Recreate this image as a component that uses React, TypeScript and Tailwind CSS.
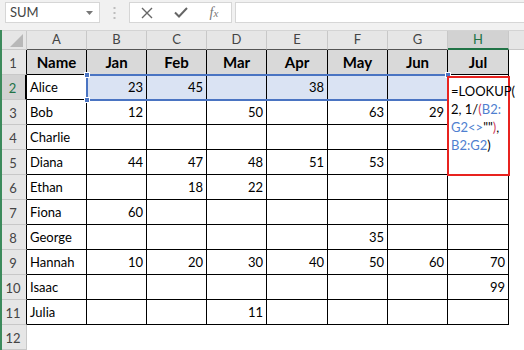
import React from "react";

const cols = ["A", "B", "C", "D", "E", "F", "G", "H"];
const head = ["Name", "Jan", "Feb", "Mar", "Apr", "May", "Jun", "Jul"];
const data: string[][] = [
  ["Alice", "23", "45", "", "38", "", "", ""],
  ["Bob", "12", "", "50", "", "63", "29", ""],
  ["Charlie", "", "", "", "", "", "", ""],
  ["Diana", "44", "47", "48", "51", "53", "", ""],
  ["Ethan", "", "18", "22", "", "", "", ""],
  ["Fiona", "60", "", "", "", "", "", ""],
  ["George", "", "", "", "", "35", "", ""],
  ["Hannah", "10", "20", "30", "40", "50", "60", "70"],
  ["Isaac", "", "", "", "", "", "", "99"],
  ["Julia", "", "", "11", "", "", "", ""],
];

function RowHead({ n, active }: { n: number; active?: boolean }) {
  return (
    <div
      className={
        "flex items-center justify-center pt-[3px] text-[13px] border-b border-[#c8c8c8] " +
        (n <= 11 ? "border-r border-r-black " : "border-r border-r-[#c8c8c8] ") +
        (active ? "bg-[#d2d2d2] text-[#217346] border-r-2 border-r-[#217346]" : "bg-[#e6e6e6] text-[#444]")
      }
    >
      {n}
    </div>
  );
}

export default function App() {
  return (
    <div
      className="relative w-[524px] h-[350px] overflow-hidden bg-white text-black"
      style={{ fontFamily: "Lato, 'Noto Sans', sans-serif" }}
    >
      {/* left green window edge */}
      <div className="absolute left-0 top-[30px] w-[2px] h-[320px] bg-[#3d8b5c] z-20" />

      {/* toolbar */}
      <div className="flex h-[31px] bg-[#f1f1f1] pt-[2px] border-b border-[#d4d4d4]">
        <div className="ml-[5px] w-[95px] h-[21px] bg-white border border-[#d6d6d6] flex items-center justify-between pl-[4px] pr-[6px]">
          <span className="text-[13px] text-[#444]">SUM</span>
          <svg width="7" height="4" viewBox="0 0 7 4">
            <path d="M0 0 L7 0 L3.5 4 Z" fill="#777" />
          </svg>
        </div>
        <div className="w-[29px] h-[21px] flex items-center justify-center">
          <svg width="3" height="12" viewBox="0 0 3 12">
            <rect x="0.5" y="0" width="2" height="2" fill="#bdbdbd" />
            <rect x="0.5" y="5" width="2" height="2" fill="#bdbdbd" />
            <rect x="0.5" y="10" width="2" height="2" fill="#bdbdbd" />
          </svg>
        </div>
        <div className="w-[103px] h-[21px] bg-white border border-[#d6d6d6] flex items-center">
          <div className="w-[33px] flex justify-center">
            <svg width="12" height="12" viewBox="0 0 12 12">
              <path d="M1 1 L11 11 M11 1 L1 11" stroke="#666" strokeWidth="1.4" />
            </svg>
          </div>
          <div className="w-[36px] flex justify-center">
            <svg width="14" height="11" viewBox="0 0 14 11">
              <path d="M1 5.5 L5 9.5 L13 1" stroke="#666" strokeWidth="2" fill="none" />
            </svg>
          </div>
          <div className="w-[30px] flex justify-center">
            <span
              className="italic text-[14px] text-[#777]"
              style={{ fontFamily: "'Liberation Serif', serif" }}
            >
              f<span className="text-[11px]">x</span>
            </span>
          </div>
        </div>
        <div className="ml-[3px] flex-1 h-[21px] bg-white border border-[#d6d6d6] border-r-0" />
      </div>

      {/* sheet grid */}
      <div className="grid grid-cols-[27px_60px_60px_60px_60px_61px_60px_60px_61px_1fr] grid-rows-[19px_repeat(12,25px)]">
        {/* corner */}
        <div className="bg-[#e6e6e6] border-r border-b border-[#c8c8c8] flex items-end justify-end pr-[3px] pb-[2px]">
          <svg width="13" height="13" viewBox="0 0 13 13">
            <path d="M13 0 L13 13 L0 13 Z" fill="#b8b8b8" />
          </svg>
        </div>
        {cols.map((c, i) => (
          <div
            key={c}
            className={
              "flex items-center justify-center text-[13px] border-r border-[#c8c8c8] " +
              (c === "H"
                ? "bg-[#d2d2d2] text-[#217346] border-b-2 border-b-[#217346]"
                : "bg-[#e6e6e6] text-[#444] border-b border-b-[#555]")
            }
          >
            {c}
          </div>
        ))}
        <div className="bg-[#e6e6e6] border-b border-[#c8c8c8]" />

        {/* row 1 header */}
        <RowHead n={1} />
        {head.map((h) => (
          <div
            key={h}
            className="bg-[#d9d9d9] border-r border-b border-black flex items-center justify-center pt-[1px] text-[15px] font-bold"
          >
            {h}
          </div>
        ))}
        <div />

        {data.map((row, ri) => (
          <React.Fragment key={ri}>
            <RowHead n={ri + 2} active={ri === 0} />
            {row.map((v, ci) => (
              <div
                key={ci}
                className={
                  "border-r border-b border-black flex items-center pt-[2px] text-[13px] " +
                  (ci === 0 ? "justify-start pl-[3px] " : "justify-end pr-[3px] ") +
                  (ri === 0 && ci >= 1 && ci <= 6 ? "bg-[#dae3f3]" : "bg-white")
                }
              >
                {v}
              </div>
            ))}
            <div />
          </React.Fragment>
        ))}

        <RowHead n={12} />
        <div className="col-span-9" />
      </div>

      {/* selection B2:G2 */}
      <div className="absolute left-[86px] top-[74px] w-[363px] h-[27px] border-2 border-[#4a74c2] pointer-events-none" />
      <div className="absolute left-[84px] top-[72px] w-[6px] h-[6px] bg-[#4a74c2] border border-white" />
      <div className="absolute left-[84px] top-[97px] w-[6px] h-[6px] bg-[#4a74c2] border border-white" />
      <div className="absolute left-[445px] top-[72px] w-[6px] h-[6px] bg-[#4a74c2] border border-white" />

      {/* edit box in H2 */}
      <div className="absolute left-[447px] top-[76px] w-[63px] h-[100px] border-2 border-[#e8231f] bg-white pl-[2px] pt-[4px] text-[13px] leading-[18px] z-10">
        <div className="whitespace-nowrap">=LOOKUP(</div>
        <div className="whitespace-nowrap">
          2, 1/<span className="text-[#d2435f]">(</span>
          <span className="text-[#4f7fd0]">B2:</span>
        </div>
        <div className="whitespace-nowrap">
          <span className="text-[#4f7fd0]">G2&lt;&gt;</span>""
          <span className="text-[#d2435f]">)</span>,
        </div>
        <div className="whitespace-nowrap">
          <span className="text-[#4f7fd0]">B2:G2</span>)
        </div>
      </div>
    </div>
  );
}
